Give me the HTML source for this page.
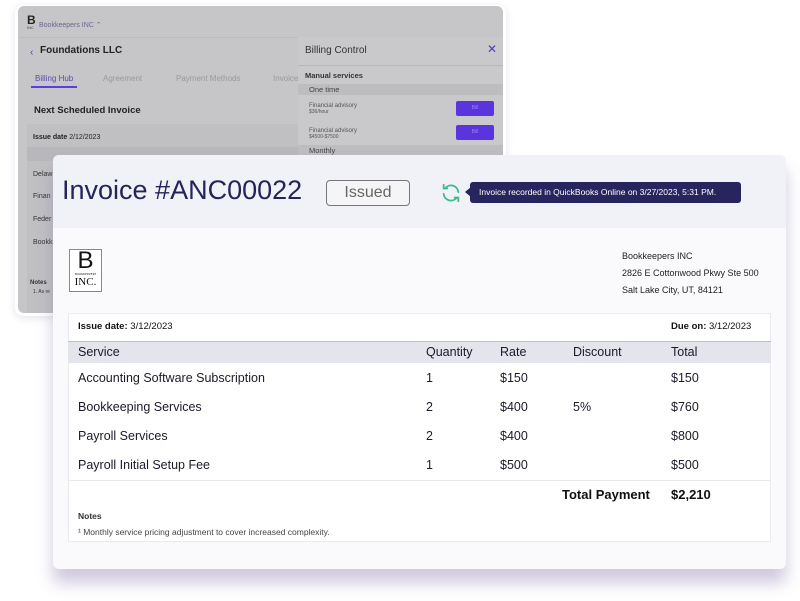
<!DOCTYPE html>
<html><head><style>
*{margin:0;padding:0;box-sizing:border-box}
body{width:800px;height:601px;background:#fff;font-family:"Liberation Sans",sans-serif;position:relative;overflow:hidden}
.abs{position:absolute}
.back{left:15px;top:5px;width:491px;height:311px;background:#fff;border-radius:8px;box-shadow:0 2px 8px rgba(120,110,150,.2)}
.bin{left:18px;top:6px;width:485px;height:307px;background:#c6c6c8;border-radius:6px;overflow:hidden}
.t{position:absolute;white-space:nowrap}
.front{left:53px;top:155px;width:733px;height:414px;background:#fafafc;border-radius:6px;box-shadow:0 14px 16px rgba(120,100,160,.35)}
</style></head><body>
<div class="abs back"></div>
<div class="abs bin">
 <div class="t" style="left:9px;top:7px;font-size:12px;font-weight:bold;color:#222">B</div>
 <div class="t" style="left:9px;top:19px;font-size:4px;color:#444">INC</div>
 <div class="t" style="left:21px;top:15px;font-size:7px;color:#6a6490">Bookkeepers INC ⌃</div>
 <div class="abs" style="left:0;top:31px;width:485px;height:1px;background:#bcbcbf"></div>
 <div class="t" style="left:12px;top:41px;font-size:10px;color:#4b3bc0">‹</div>
 <div class="t" style="left:22px;top:39px;font-size:10px;font-weight:bold;color:#222">Foundations LLC</div>
 <div class="t" style="left:17px;top:68px;font-size:8px;color:#5a4ab0">Billing Hub</div>
 <div class="abs" style="left:13px;top:80px;width:46px;height:2px;background:#5b3ee0"></div>
 <div class="t" style="left:85px;top:68px;font-size:8px;color:#999">Agreement</div>
 <div class="t" style="left:158px;top:68px;font-size:8px;color:#999">Payment Methods</div>
 <div class="t" style="left:255px;top:68px;font-size:8px;color:#999">Invoice</div>
 <div class="t" style="left:16px;top:99px;font-size:9.5px;font-weight:bold;color:#222">Next Scheduled Invoice</div>
 <div class="abs" style="left:9px;top:118px;width:280px;height:200px;background:#c0c0c2"></div>
 <div class="t" style="left:15px;top:128px;font-size:7px;color:#222"><b>Issue date</b> 2/12/2023</div>
 <div class="abs" style="left:9px;top:141px;width:280px;height:14px;background:#b8b8bc"></div>
 <div class="t" style="left:15px;top:165px;font-size:7px;color:#333">Delaw</div>
 <div class="t" style="left:15px;top:187px;font-size:7px;color:#333">Finan</div>
 <div class="t" style="left:15px;top:210px;font-size:7px;color:#333">Feder</div>
 <div class="t" style="left:15px;top:233px;font-size:7px;color:#333">Bookk</div>
 <div class="t" style="left:12px;top:274px;font-size:6px;font-weight:bold;color:#333">Notes</div>
 <div class="t" style="left:15px;top:283px;font-size:5px;color:#333">1. As re</div>
 <div class="abs" style="left:280px;top:31px;width:205px;height:280px;background:#c9c9cb"></div>
 <div class="t" style="left:287px;top:39px;font-size:10px;color:#333">Billing Control</div>
 <div class="t" style="left:469px;top:36px;font-size:12px;color:#4b3bc0">✕</div>
 <div class="abs" style="left:280px;top:59px;width:205px;height:1px;background:#b8b8bb"></div>
 <div class="t" style="left:287px;top:65px;font-size:7.5px;font-weight:bold;color:#333">Manual services</div>
 <div class="abs" style="left:280px;top:78px;width:205px;height:11px;background:#bdbdc0"></div>
 <div class="t" style="left:291px;top:79px;font-size:7.5px;color:#444">One time</div>
 <div class="t" style="left:291px;top:97px;font-size:6px;color:#555">Financial advisory<br><span style="font-size:5px">$36/hour</span></div>
 <div class="abs" style="left:438px;top:95px;width:38px;height:15px;background:#5a34dd;border-radius:2px;color:#9a88e8;font-size:5px;text-align:center;line-height:15px">Bill</div>
 <div class="t" style="left:291px;top:122px;font-size:6px;color:#555">Financial advisory<br><span style="font-size:5px">$4500-$7500</span></div>
 <div class="abs" style="left:438px;top:119px;width:38px;height:15px;background:#5a34dd;border-radius:2px;color:#9a88e8;font-size:5px;text-align:center;line-height:15px">Bill</div>
 <div class="abs" style="left:280px;top:139px;width:205px;height:11px;background:#bdbdc0"></div>
 <div class="t" style="left:291px;top:140px;font-size:7.5px;color:#444">Monthly</div>
</div>

<div class="abs front">
 <div class="abs" style="left:0;top:0;width:733px;height:73px;background:#f1f2f8;border-radius:6px 6px 0 0"></div>
 <div class="t" style="left:9px;top:20px;font-size:27px;color:#25245a">Invoice #ANC00022</div>
 <div class="abs" style="left:273px;top:25px;width:84px;height:26px;border:1.5px solid #777;border-radius:4px;background:#f5f5f7;color:#666;font-size:16px;text-align:center;line-height:23px">Issued</div>
 <svg class="abs" style="left:387px;top:27px" width="22" height="22" viewBox="0 0 24 24" fill="none" stroke="#3dbb8a" stroke-width="2" stroke-linecap="round"><path d="M20 11a8 8 0 0 0-14-4.5M4 3v4h4M4 13a8 8 0 0 0 14 4.5M20 21v-4h-4"/></svg>
 <div class="abs" style="left:417px;top:27px;width:271px;height:21px;background:#27245e;border-radius:3px;color:#fff;font-size:8.5px;line-height:21px;padding-left:9px">Invoice recorded in QuickBooks Online on 3/27/2023, 5:31 PM.</div>
 <div class="abs" style="left:412px;top:32px;width:0;height:0;border-top:5px solid transparent;border-bottom:5px solid transparent;border-right:6px solid #27245e"></div>
 <div class="abs" style="left:16px;top:94px;width:33px;height:43px;border:1px solid #888;background:#fff;font-family:'Liberation Serif',serif;text-align:center;color:#111">
  <div style="font-size:24px;line-height:22px;font-family:'Liberation Sans',sans-serif">B</div>
  <div style="font-size:3px;line-height:4px">BOOKKEEPERS</div>
  <div style="font-size:11px;line-height:12px">INC.</div>
 </div>
 <div class="t" style="left:569px;top:93px;font-size:9px;color:#222;line-height:17px">Bookkeepers INC<br>2826 E Cottonwood Pkwy Ste 500<br>Salt Lake City, UT, 84121</div>
 <div class="abs" style="left:15px;top:158px;width:703px;height:229px;background:#fff;border:1px solid #ebebef"></div>
 <div class="t" style="left:25px;top:166px;font-size:9.5px;color:#111"><b>Issue date:</b> 3/12/2023</div>
 <div class="t" style="left:618px;top:166px;font-size:9.5px;color:#111"><b>Due on:</b> 3/12/2023</div>
 <div class="abs" style="left:15px;top:186px;width:703px;height:22px;background:#e3e4ec;border-top:1.5px solid #bfc0cc"></div>
 <div style="position:absolute;left:0;top:0;font-size:12.5px;color:#1a1a2a">
  <div class="t" style="left:25px;top:190px">Service</div><div class="t" style="left:373px;top:190px">Quantity</div><div class="t" style="left:447px;top:190px">Rate</div><div class="t" style="left:520px;top:190px">Discount</div><div class="t" style="left:618px;top:190px">Total</div>
  <div class="t" style="left:25px;top:216px">Accounting Software Subscription</div><div class="t" style="left:373px;top:216px">1</div><div class="t" style="left:447px;top:216px">$150</div><div class="t" style="left:618px;top:216px">$150</div>
  <div class="t" style="left:25px;top:245px">Bookkeeping Services</div><div class="t" style="left:373px;top:245px">2</div><div class="t" style="left:447px;top:245px">$400</div><div class="t" style="left:520px;top:245px">5%</div><div class="t" style="left:618px;top:245px">$760</div>
  <div class="t" style="left:25px;top:274px">Payroll Services</div><div class="t" style="left:373px;top:274px">2</div><div class="t" style="left:447px;top:274px">$400</div><div class="t" style="left:618px;top:274px">$800</div>
  <div class="t" style="left:25px;top:303px">Payroll Initial Setup Fee</div><div class="t" style="left:373px;top:303px">1</div><div class="t" style="left:447px;top:303px">$500</div><div class="t" style="left:618px;top:303px">$500</div>
 </div>
 <div class="abs" style="left:15px;top:325px;width:703px;height:1px;background:#ebebef"></div>
 <div class="t" style="left:509px;top:332px;font-size:13px;font-weight:bold;color:#111">Total Payment</div>
 <div class="t" style="left:618px;top:332px;font-size:13px;font-weight:bold;color:#111">$2,210</div>
 <div class="t" style="left:25px;top:356px;font-size:8.5px;font-weight:bold;color:#333">Notes</div>
 <div class="t" style="left:25px;top:372px;font-size:8.5px;color:#444">¹ Monthly service pricing adjustment to cover increased complexity.</div>
</div>
</body></html>
